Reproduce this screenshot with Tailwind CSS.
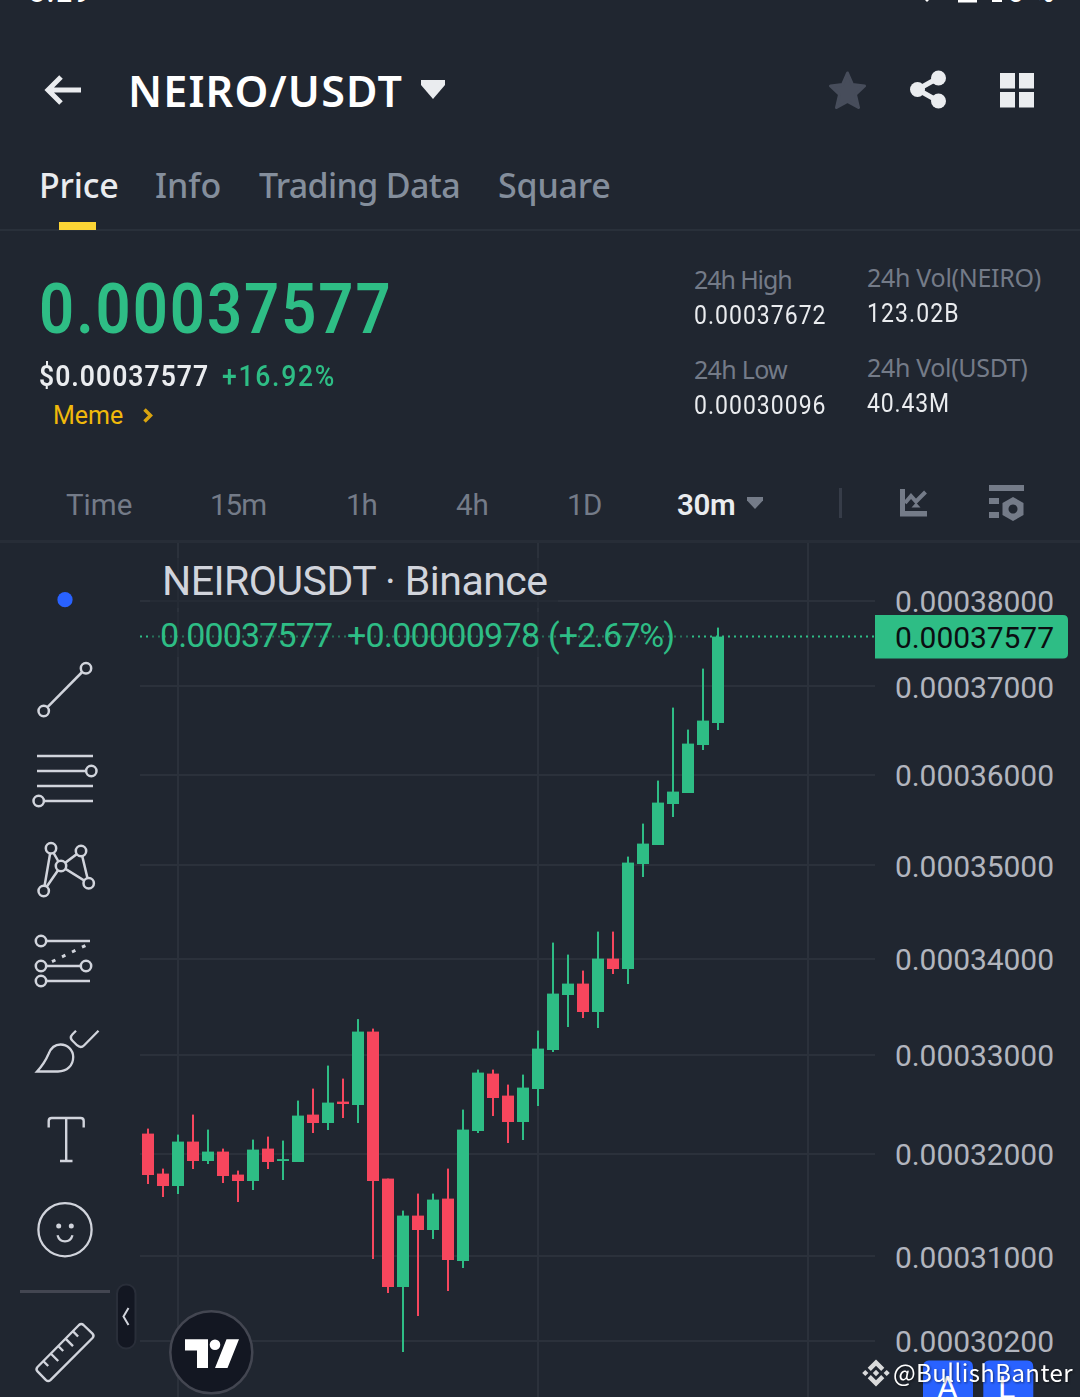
<!DOCTYPE html>
<html lang="en">
<head>
    <meta charset="UTF-8">
    <meta name="viewport" content="width=device-width, initial-scale=1.0">
    <title>NEIRO/USDT</title>
    <script src="https://cdn.jsdelivr.net/npm/@tailwindcss/browser@4"></script>
</head>
<body class="bg-[#202630] text-[#eaecef] font-['Noto_Sans',sans-serif]">

<div class="w-[1080px] h-[1397px] overflow-hidden flex flex-col">

    <!-- Status bar, scrolled almost out of view -->
    <svg class="block h-[4px] w-[1080px] shrink-0" viewBox="0 0 1080 4" fill="#fff" font-family="Roboto, sans-serif" font-weight="500" font-size="28">
        <text x="29" y="2" textLength="61">8:29</text>
        <path d="M925 0h4l-2 2z M958 0h19v2.500h-19z M992 0h10v2h-10z"/>
        <text x="1008" y="2" textLength="46">0%</text>
    </svg>

    <!-- Header -->
    <header class="flex items-center h-[136px] shrink-0 pt-[36px] pr-[46px] pl-[44px]">
        <svg class="w-[38px] h-[30px]" viewBox="0 0 38 30" fill="none" stroke="#eaecef" stroke-width="5"><path d="M37 15H4M17 2L4 15L17 28"/></svg>
        <h1 class="ml-[46px] pt-[2px] w-[276px] text-[43px] leading-[60px] font-semibold tracking-[1.2px] text-white whitespace-nowrap">NEIRO/USDT</h1>
        <svg class="ml-[17px] mb-[2px] w-[24px] h-[19px]" viewBox="0 0 24 19" fill="#eaecef"><path d="M0 0h24v5L12 19L0 5z"/></svg>
        <div class="ml-auto flex items-center">
            <svg class="w-[38px] h-[40px]" viewBox="0 0 38 40" fill="#474d5b" stroke="#474d5b" stroke-width="3" stroke-linejoin="round"><path d="M19.500 3l5 11.500l12 1.500l-9 8.500l3 13L19.500 31.500L8.500 37.500l3-13L2.500 16l12-1.500z"/></svg>
            <svg class="ml-[43px] w-[38px] h-[40px]" viewBox="0 0 38 40" fill="#eaecef"><circle cx="8.500" cy="19.500" r="7.500"/><circle cx="29.500" cy="8" r="7.500"/><circle cx="29.500" cy="31" r="7.500"/><path d="M29 8L8.500 19.500L29 31" fill="none" stroke="#eaecef" stroke-width="5"/></svg>
            <svg class="ml-[53px] w-[34px] h-[35px]" viewBox="0 0 34 35" fill="#eaecef"><path d="M0 0h15v15.500H0z M19 0h15v15.500H19z M0 19h15v15.500H0z M19 19h15v15.500H19z"/></svg>
        </div>
    </header>

    <!-- Tabs -->
    <nav class="flex h-[91px] shrink-0 border-b-2 border-[#29303a] pl-[39px] pt-[22px] text-[34px] leading-[46px] font-medium text-[#848e9c] whitespace-nowrap">
        <div class="w-[116px] text-[#eaecef]">
            <span class="tracking-[-0.2px]">Price</span>
            <div class="ml-[20px] mt-[14px] h-[8px] w-[37px] bg-[#fcd535]"></div>
        </div>
        <div class="w-[104px]">Info</div>
        <div class="w-[239px] tracking-[-0.65px]">Trading Data</div>
        <div class="tracking-[-0.2px]">Square</div>
    </nav>

    <!-- Price summary -->
    <section class="flex h-[234px] shrink-0 pl-[39px] whitespace-nowrap font-['Roboto',sans-serif]">
        <div class="w-[655px] pt-[38px]">
            <div class="origin-left scale-x-[0.88] text-[70px] leading-[80px] font-semibold tracking-[2.2px] text-[#2ebd85]">0.00037577</div>
            <div class="mt-[7px] flex text-[29.5px] leading-[40px]">
                <div class="w-[183px] origin-left scale-x-[0.9] font-semibold tracking-[1.1px]">$0.00037577</div>
                <div class="origin-left scale-x-[0.9] font-medium tracking-[1.9px] text-[#2ebd85]">+16.92%</div>
            </div>
            <div class="flex items-center pl-[14px] text-[25px] leading-[40px] text-[#f0b90b]">
                <div class="w-[90px]">Meme</div>
                <svg class="mb-[2px] w-[10px] h-[15px]" viewBox="0 0 10 15" fill="none" stroke="#d9a40f" stroke-width="3.500"><path d="M1.500 1.500l6 6l-6 6"/></svg>
            </div>
        </div>
        <div class="w-[173px] pt-[31px] text-[25px] leading-[35px]">
            <div class="text-[#747b88] tracking-[-1.1px] font-['Noto_Sans',sans-serif]">24h High</div>
            <div class="pt-px mb-[19px] origin-left scale-x-[0.92] tracking-[1.1px]">0.00037672</div>
            <div class="text-[#747b88] tracking-[-0.7px] font-['Noto_Sans',sans-serif]">24h Low</div>
            <div class="pt-px origin-left scale-x-[0.92] tracking-[1.1px]">0.00030096</div>
        </div>
        <div class="pt-[29px] text-[25px] leading-[35px]">
            <div class="text-[#747b88] tracking-[-0.3px] font-['Noto_Sans',sans-serif]">24h Vol(NEIRO)</div>
            <div class="pt-px mb-[19px] origin-left scale-x-[0.92] tracking-[1.2px]">123.02B</div>
            <div class="text-[#747b88] tracking-[-0.35px] font-['Noto_Sans',sans-serif]">24h Vol(USDT)</div>
            <div class="pt-px origin-left scale-x-[0.92] tracking-[0.9px]">40.43M</div>
        </div>
    </section>

    <!-- Intervals -->
    <nav class="flex h-[78px] shrink-0 items-center border-b-3 border-[#272d37] pl-[66px] text-[29.5px] leading-[40px] text-[#747b88] whitespace-nowrap font-['Roboto',sans-serif]">
        <div class="w-[144px] pt-[4px]">Time</div>
        <div class="w-[136px] pt-[4px] tracking-[-1px]">15m</div>
        <div class="w-[110px] pt-[4px] tracking-[-1px]">1h</div>
        <div class="w-[111px] pt-[4px]">4h</div>
        <div class="w-[110px] pt-[4px] tracking-[-0.7px]">1D</div>
        <div class="w-[70px] pt-[4px] font-semibold tracking-[-0.3px] text-[#eaecef]">30m</div>
        <svg class="w-[16px] h-[12px]" viewBox="0 0 16 12" fill="#747b88"><path d="M0 0h16v3.500L8 12L0 3.500z"/></svg>
        <div class="ml-[76px] h-[30px] w-[3px] bg-[#363c48]"></div>
        <svg class="ml-[58px] w-[27px] h-[28px]" viewBox="0 0 27 28" fill="#747b88"><path d="M0 0h5v22h22v5.500H0z M11.500 18.500l4.500-5l4.500 5z"/><path d="M5 14L11 7l5 5.500L25.500 3" fill="none" stroke="#747b88" stroke-width="4"/></svg>
        <svg class="ml-[62px] w-[35px] h-[36px]" viewBox="0 0 35 36" fill="#747b88"><path d="M0 0h35v6H0z M0 13h10v6H0z M0 27h10v6H0z"/><path fill-rule="evenodd" d="M24 12l10.500 6v12L24 36l-10.500-6V18z M24 19.500a4.500 4.500 0 1 0 .01 0z"/></svg>
    </nav>

    <!-- Chart -->
    <main class="flex h-[854px] shrink-0">

        <!-- Drawing tools -->
        <aside class="w-[140px] shrink-0 pt-[12px] flex flex-col">
            <svg class="h-[90px] w-[140px] shrink-0" viewBox="0 555 140 90"><circle cx="65" cy="599.700" r="7.600" fill="#2962ff"/></svg>
            <svg class="h-[90px] w-[140px] shrink-0" viewBox="0 645 140 90" fill="none" stroke="#d1d4dc" stroke-width="2.500"><circle cx="86" cy="668.300" r="5.200"/><circle cx="43.700" cy="711" r="5.200"/><path d="M47.500 707.200L82.200 672"/></svg>
            <svg class="h-[90px] w-[140px] shrink-0" viewBox="0 735 140 90" fill="none" stroke="#d1d4dc" stroke-width="2.500"><path d="M37 756h56M37 771h49M37 786h56M44 801h49"/><circle cx="91.300" cy="771" r="5.200"/><circle cx="38.700" cy="801" r="5.200"/></svg>
            <svg class="h-[90px] w-[140px] shrink-0" viewBox="0 825 140 90" fill="#202630" stroke="#d1d4dc" stroke-width="2.500"><path fill="none" d="M61 866L51 848.300L43.700 891L61 866L81 851L88.700 883.300Z"/><circle cx="51" cy="848.300" r="5.200"/><circle cx="81" cy="851" r="5.200"/><circle cx="61" cy="866" r="5.200"/><circle cx="88.700" cy="883.300" r="5.200"/><circle cx="43.700" cy="891" r="5.200"/></svg>
            <svg class="h-[90px] w-[140px] shrink-0" viewBox="0 915 140 90" fill="none" stroke="#d1d4dc" stroke-width="2.500"><path d="M46 941h44M46 966h35M46 981h44"/><circle cx="41" cy="941" r="5.200"/><circle cx="41" cy="966" r="5.200"/><circle cx="86" cy="966" r="5.200"/><circle cx="41" cy="981" r="5.200"/><path d="M52 961.600l3.400-1.600M62 956.800l3.400-1.600M72 952l3.400-1.600M82 947.200l3.400-1.600" stroke-width="3"/></svg>
            <svg class="h-[90px] w-[140px] shrink-0" viewBox="0 1005 140 90" fill="none" stroke="#d1d4dc" stroke-width="2.300"><path d="M37 1071.500C43 1065 46 1060 48.500 1054C51 1047.500 55 1044.500 60.500 1044.500C67.500 1044.500 73.200 1050 73.200 1057C73.200 1065.500 67 1071.500 58 1071.500Z"/><path d="M76 1030.700l-3.500 3.500c-2 2-2 4.500 0 6.500l4.500 4.500c2.500 2.300 5 2.300 7.200 0l14.300-14.500"/></svg>
            <svg class="h-[90px] w-[140px] shrink-0" viewBox="0 1095 140 90" fill="none" stroke="#d1d4dc" stroke-width="2.400"><path d="M48.700 1127.500v-6.500q0-3 3-3h29q3 0 3 3v6.500M66.200 1118v43M60 1161h12.500"/></svg>
            <svg class="h-[90px] w-[140px] shrink-0" viewBox="0 1185 140 90" fill="none" stroke="#d1d4dc" stroke-width="2.300"><circle cx="65" cy="1229.700" r="26.600"/><path d="M57.500 1235.300c2.300 8.200 12.700 8.200 15 0"/><path fill="#d1d4dc" stroke="none" d="M56.200 1226a2.500 2.500 0 1 0 5 0a2.500 2.500 0 1 0-5 0M68.800 1226a2.500 2.500 0 1 0 5 0a2.500 2.500 0 1 0-5 0"/></svg>
            <div class="mt-[15px] ml-[20px] h-[3px] w-[90px] shrink-0 bg-[#434651]"></div>
            <div class="flex h-[104px] shrink-0">
                <svg class="h-[104px] w-[116px] shrink-0" viewBox="0 1293 116 104" fill="none" stroke="#d1d4dc" stroke-width="2.400" stroke-linejoin="round"><path d="M79 1325L37.500 1367q-2 2.200 0 4.400l8.500 8.700q2.200 2 4.400 0L92.500 1338q2-2.200 0-4.400l-9-8.600q-2.200-2-4.500 0zM43.200 1361l5 5M50.700 1353.500l7.500 7.500M58.200 1346l5 5M65.500 1338.700l7.500 7.500M72.800 1331.200l5.300 5.300"/></svg>
                <svg class="-mt-[10px] h-[67px] w-[22px] shrink-0" viewBox="0 0 22 67"><rect x="1" y="1.500" width="18.500" height="64" rx="9" fill="#131722" stroke="#292e39" stroke-width="2"/><path d="M12.500 25l-5 8.500l5 8.500" fill="none" stroke="#d1d4dc" stroke-width="2"/></svg>
            </div>
        </aside>

        <svg class="h-[854px] w-[940px] shrink-0" viewBox="140 543 940 854" font-family="Roboto, sans-serif">
            <g id="grid" fill="#2b313b"></g>
            <path d="M140 636.500H875" stroke="#2ebd85" stroke-width="2" stroke-dasharray="2 4"/>
            <path d="M150 558h408v50H150z M150 612h542v45H150z" fill="#202630" fill-opacity="0.5"/>
            <g id="candles"></g>
            <text x="162" y="594.500" font-size="41" textLength="386" fill="#d1d4dc">NEIROUSDT · Binance</text>
            <g font-size="34" fill="#2ebd85">
                <text x="160" y="646.700" textLength="173">0.00037577</text>
                <text x="347" y="646.700" textLength="193">+0.00000978</text>
                <text x="548" y="646.700" textLength="127">(+2.67%)</text>
            </g>
            <g id="axis" font-size="30" fill="#b2b5be"></g>
            <path d="M875 615h188q5 0 5 5v33.500q0 5-5 5H875z" fill="#2ebd85"/>
            <text x="895" y="647.700" font-size="30" textLength="159" fill="#0b0e11">0.00037577</text>

            <!-- TradingView badge -->
            <circle cx="211.300" cy="1352.300" r="41" fill="#131722" stroke="#434651" stroke-width="2.500"/>
            <path d="M185 1339.300h23V1368h-11v-17.500h-12zM226.500 1339.300h12.500L227.500 1368H215z" fill="#fff"/>
            <circle cx="215" cy="1344.700" r="5.300" fill="#fff"/>

            <!-- Scale buttons -->
            <path d="M923 1397v-30q0-6.500 6-6.500h38q6 0 6 6.500v30zM983.300 1397v-30q0-6.500 6-6.500h38q6 0 6 6.500v30z" fill="#2962ff"/>
            <text x="937" y="1397.500" font-size="32" fill="#fff">A</text>
            <text x="998" y="1397.500" font-size="32" fill="#fff">L</text>

            <!-- Watermark -->
            <path transform="translate(876 1373)" fill="#d9dadb" d="M0-13.500L8.300-5.200L5.200-2.100L0-7.300L-5.200-2.100L-8.300-5.200zM0 13.500L8.300 5.200L5.200 2.100L0 7.300L-5.200 2.100L-8.300 5.200zM0-3.200L3.200 0L0 3.200L-3.200 0zM-10.700-3.100L-7.600 0L-10.700 3.100L-13.800 0zM10.700-3.100L13.800 0L10.700 3.100L7.600 0z"/>
            <text class="drop-shadow-[1px_1px_1px_rgba(0,0,0,0.5)]" x="893" y="1381.700" font-size="24" textLength="179.500" fill="#fff" font-family="'Noto Sans CJK SC', sans-serif">@BullishBanter</text>
        </svg>
    </main>
</div>

<script>
  const SVG_NS = 'http://www.w3.org/2000/svg';

  // x, color, high, body top, body bottom, low
  const candles = [
    [148, 'r', 1128, 1133, 1175, 1184],
    [163, 'r', 1168, 1173, 1186, 1197],
    [178, 'g', 1134, 1141, 1186, 1194],
    [193, 'r', 1114, 1141, 1161, 1169],
    [208, 'g', 1129, 1151, 1161, 1164],
    [223, 'r', 1148, 1151, 1176, 1183],
    [238, 'r', 1170, 1174, 1181, 1202],
    [253, 'g', 1139, 1149, 1181, 1190],
    [268, 'r', 1136, 1148, 1162, 1169],
    [283, 'g', 1140, 1158.500, 1161, 1180],
    [298, 'g', 1100, 1115, 1162, 1162],
    [313, 'r', 1088, 1114, 1123, 1133],
    [328, 'g', 1065, 1102, 1123, 1130],
    [343, 'r', 1078, 1101, 1104, 1118],
    [358, 'g', 1018.500, 1031, 1105, 1123],
    [373, 'r', 1028, 1031, 1181, 1259],
    [388, 'r', 1178, 1178, 1287, 1293],
    [403, 'g', 1210, 1215, 1287, 1352],
    [418, 'r', 1193, 1215, 1230, 1316],
    [433, 'g', 1193, 1199, 1230, 1239],
    [448, 'r', 1168, 1198, 1260, 1291],
    [463, 'g', 1109, 1129, 1261, 1268],
    [478, 'g', 1069, 1072, 1131, 1133],
    [493, 'r', 1069, 1073, 1098, 1116],
    [508, 'r', 1084, 1095, 1122, 1143],
    [523, 'g', 1074, 1087, 1122, 1140],
    [538, 'g', 1030, 1048, 1089, 1106],
    [553, 'g', 942, 993, 1050, 1052],
    [568, 'g', 954, 983, 995, 1027],
    [583, 'r', 970, 983, 1012, 1018],
    [598, 'g', 931, 958, 1012, 1028],
    [613, 'r', 931, 958, 969, 974],
    [628, 'g', 856, 862, 969, 984],
    [643, 'g', 823, 843, 864, 877],
    [658, 'g', 780, 802, 845, 845],
    [673, 'g', 707, 791, 804, 817],
    [688, 'g', 729, 743, 793, 793],
    [703, 'g', 668, 720, 745, 750],
    [718, 'g', 627, 636, 723, 730],
  ];

  // label, grid line y, text baseline
  const ticks = [
    ['0.00038000', 600, 611.700],
    ['0.00037000', 685, 697.500],
    ['0.00036000', 774, 785.500],
    ['0.00035000', 864, 876.500],
    ['0.00034000', 958, 969.700],
    ['0.00033000', 1054, 1065.700],
    ['0.00032000', 1153, 1164.700],
    ['0.00031000', 1255, 1267.700],
    ['0.00030200', 1340, 1351.500],
  ];

  function add(parent, tag, attrs) {
    const el = document.createElementNS(SVG_NS, tag);
    Object.entries(attrs).forEach(([key, value]) => el.setAttribute(key, value));
    document.getElementById(parent).appendChild(el);
    return el;
  }

  [178, 538, 808].forEach(x => add('grid', 'rect', {x: x - 1, y: 543, width: 2, height: 854}));
  ticks.forEach(([label, y, baseline]) => {
    add('grid', 'rect', {x: 140, y: y, width: 735, height: 2});
    add('axis', 'text', {x: 895, y: baseline, textLength: 159}).textContent = label;
  });

  // Tops sit a little over half a pixel down
  const shift = 0.6;
  candles.forEach(([x, color, high, top, bottom, low]) => {
    const fill = color === 'g' ? '#2ebd85' : '#f6465d';
    add('candles', 'rect', {x: x - 1, y: high + shift, width: 2, height: Math.max(0, low - high - shift), fill: fill});
    add('candles', 'rect', {x: x - 6, y: top + shift, width: 12, height: bottom - top - shift, fill: fill});
  });
</script>

</body>
</html>
